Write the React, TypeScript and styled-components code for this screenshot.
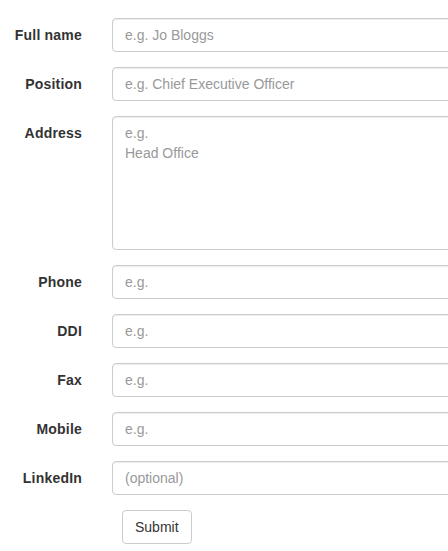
import React from "react";
import styled, { createGlobalStyle } from "styled-components";

const Global = createGlobalStyle`
  html, body { margin: 0; padding: 0; background: #fff; overflow: hidden; }
  body { font-family: "Liberation Sans", Arial, Helvetica, sans-serif; font-size: 14px; line-height: 20px; color: #333; }
  * { box-sizing: border-box; }
`;

const Page = styled.div`
  width: 100vw;
  height: 100vh;
  overflow: hidden;
`;

const Form = styled.form`
  display: grid;
  grid-template-columns: 82px 420px;
  column-gap: 30px;
  row-gap: 15px;
  padding-top: 18px;
  width: 560px;
`;

const Label = styled.label`
  font-weight: bold;
  text-align: right;
  padding-top: 7px;
  line-height: 20px;
  letter-spacing: 0.2px;
  white-space: nowrap;
  color: #333;
`;

const fieldCss = `
  display: block;
  width: 100%;
  padding: 6px 12px;
  font-family: "Liberation Sans", Arial, Helvetica, sans-serif;
  font-size: 14px;
  line-height: 20px;
  color: #555;
  background: #fff;
  border: 1px solid #ccc;
  border-radius: 4px;
  box-shadow: inset 0 1px 1px rgba(0,0,0,.075);
  outline: none;
  &::placeholder { color: #999; opacity: 1; }
`;

const Input = styled.input`
  ${fieldCss}
  height: 34px;
`;

const TextArea = styled.textarea`
  ${fieldCss}
  height: 134px;
  resize: none;
`;

const Actions = styled.div`
  grid-column: 2;
  padding-left: 10px;
`;

const Button = styled.button`
  font-family: "Liberation Sans", Arial, Helvetica, sans-serif;
  font-size: 14px;
  line-height: 20px;
  padding: 6px 12px;
  height: 34px;
  color: #333;
  background: #fff;
  border: 1px solid #ccc;
  border-radius: 4px;
  cursor: pointer;
`;

const fields: { label: string; placeholder: string; area?: boolean }[] = [
  { label: "Full name", placeholder: "e.g. Jo Bloggs" },
  { label: "Position", placeholder: "e.g. Chief Executive Officer" },
  { label: "Address", placeholder: "e.g.\nHead Office", area: true },
  { label: "Phone", placeholder: "e.g." },
  { label: "DDI", placeholder: "e.g." },
  { label: "Fax", placeholder: "e.g." },
  { label: "Mobile", placeholder: "e.g." },
  { label: "LinkedIn", placeholder: "(optional)" },
];

export default function App() {
  return (
    <Page>
      <Global />
      <Form onSubmit={(e) => e.preventDefault()}>
        {fields.map((f) => (
          <React.Fragment key={f.label}>
            <Label>{f.label}</Label>
            {f.area ? <TextArea placeholder={f.placeholder} /> : <Input placeholder={f.placeholder} />}
          </React.Fragment>
        ))}
        <Actions>
          <Button type="submit">Submit</Button>
        </Actions>
      </Form>
    </Page>
  );
}
